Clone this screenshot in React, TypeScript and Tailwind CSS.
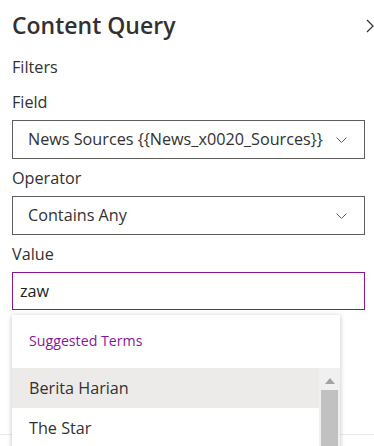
import React from "react";

const font = { fontFamily: '"Open Sans", "Noto Sans", sans-serif' };

function ChevronDown() {
  return (
    <svg width="11" height="6" viewBox="0 0 11 6" className="shrink-0">
      <path d="M0.5 0.5 L5.5 5.5 L10.5 0.5" fill="none" stroke="#605e5c" strokeWidth="1" />
    </svg>
  );
}

function Label({ children }: { children: React.ReactNode }) {
  return (
    <div className="pt-[7px] pb-[6px] text-[16.2px] leading-[24px] text-[#323130]">
      {children}
    </div>
  );
}

function Dropdown({ value }: { value: string }) {
  return (
    <div className="flex h-[39px] items-center justify-between border border-[#605e5c] pl-[15px] pr-[17px] text-[16.2px] text-[#323130]">
      <span className="whitespace-nowrap">{value}</span>
      <ChevronDown />
    </div>
  );
}

export default function App() {
  return (
    <div
      className="relative h-[446px] w-[374px] overflow-hidden bg-white"
      style={font}
    >
      <div className="pl-[12px] pr-[9px]">
        <div className="flex items-center justify-between pt-[9px]">
          <h1 className="text-[23px] font-semibold leading-[32px] text-[#323130]">
            Content Query
          </h1>
          <svg width="8" height="14" viewBox="0 0 8 14" className="mr-[-9px] mt-[2px]">
            <path d="M1 1 L7 7 L1 13" fill="none" stroke="#323130" strokeWidth="1.2" />
          </svg>
        </div>
        <div className="mt-[8px] h-[34px] pt-[6px] text-[16.2px] leading-[24px] text-[#323130]">
          Filters
        </div>
        <Label>Field</Label>
        <Dropdown value="News Sources {{News_x0020_Sources}}" />
        <Label>Operator</Label>
        <Dropdown value="Contains Any" />
        <Label>Value</Label>
        <div className="flex h-[38px] items-center border border-[#881798] pl-[7px] text-[16.2px] text-[#201f1e]">
          zaw
        </div>
      </div>
      <div className="absolute left-0 right-0 top-[434px] h-px bg-[#edebe9]" />

      <div className="absolute left-[12px] top-[315px] w-[328px] bg-white shadow-[0_1px_5px_rgba(0,0,0,0.25)]">
        <div className="h-[53px] pl-[17px] pt-[16px] text-[14.2px] leading-[20px] text-[#881798]">
          Suggested Terms
        </div>
        <div className="flex">
          <div className="flex-1">
            <div className="flex h-[40px] items-center bg-[#edebe9] pl-[17px] text-[16.2px] text-[#323130]">
              Berita Harian
            </div>
            <div className="flex h-[40px] items-center pl-[17px] text-[16.2px] text-[#323130]">
              The Star
            </div>
          </div>
          <div className="flex w-[21px] flex-col items-center bg-[#f0f0f0]">
            <svg width="10" height="6" viewBox="0 0 10 6" className="mt-[10px]">
              <path d="M0 6 L5 0 L10 6 Z" fill="#a3a3a3" />
            </svg>
            <div className="mt-[6px] h-[80px] w-[17px] bg-[#c1c1c1]" />
          </div>
        </div>
      </div>
    </div>
  );
}
